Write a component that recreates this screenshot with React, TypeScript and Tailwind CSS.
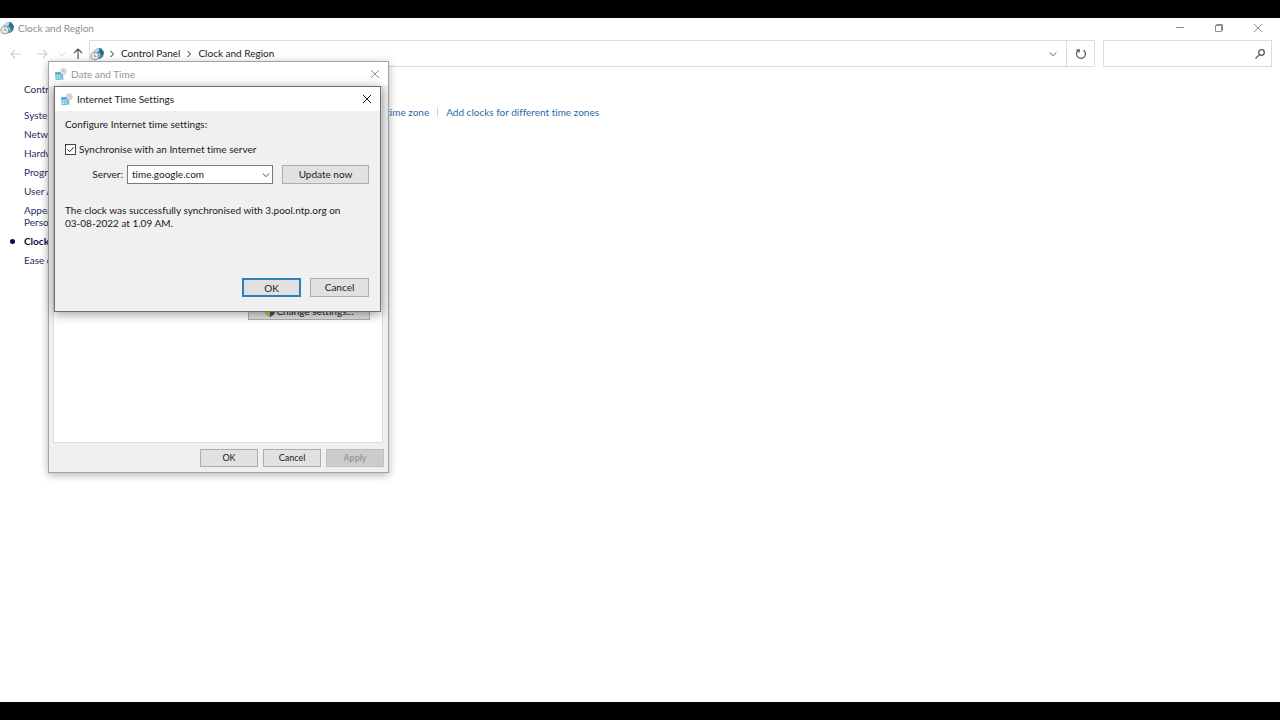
import { useState } from 'react'
import type { ReactNode } from 'react'

const sidebarLinks = [
  'System and Security',
  'Network and Internet',
  'Hardware and Sound',
  'Programs',
  'User Accounts',
  'Appearance and Personalisation',
  'Clock and Region',
  'Ease of Access',
]

function GlobeClockIcon() {
  return (
    <svg viewBox="0 0 14 14" className="size-3.5 shrink-0" aria-hidden="true">
      <path d="M3.400 4.200 7.600.8l3.600.6L13.800 5l-.8 5-3.600 2.200L5 10z" fill="#4f90ad" />
      <path d="M3.400 4.200 7.600.8l2 1.500-1.800 2.800-3 1.200z" fill="#b4dbe9" />
      <path d="m9.600 1.200 1.600.2L13.800 5l-.6 3.400-1.600.4-2-3z" fill="#2f6c8b" />
      <path d="m7.600 5.800 2.600.8-.2 3.400-2-.6z" fill="#8fc6da" />
      <circle cx="4.700" cy="9.200" r="3.900" fill="#f1f3f5" stroke="#7c8791" strokeWidth=".8" />
      <path d="M4.700 6.800v2.600h2M1.900 9.200h.8M4.700 11.300v.8" fill="none" stroke="#66717a" strokeWidth=".7" />
    </svg>
  )
}

function DateTimeIcon() {
  return (
    <svg viewBox="0 0 13 13" className="size-[13px] shrink-0" aria-hidden="true">
      <path d="M1 4.400 8.600 4l1 7.600-8 .6z" fill="#6fc3dc" />
      <path d="m1 4.400 7.600-.4.2 1.800-7.600.3z" fill="#48a6c5" />
      <path d="M2.400 7.200h1.400v1.400H2.400zM4.800 7h1.400v1.400H4.800zM2.600 9.600H4V11H2.600zM5 9.400h1.400v1.400H5z" fill="#d3f0f8" />
      <circle cx="9.300" cy="3.600" r="2.900" fill="#e6e9eb" stroke="#a9b2b8" strokeWidth=".7" />
      <path d="M9.300 2v1.800h1.400" fill="none" stroke="#828c93" strokeWidth=".6" />
    </svg>
  )
}

function ShieldIcon() {
  return (
    <svg viewBox="0 0 12 12" className="size-3 shrink-0" aria-hidden="true">
      <path d="M6 0 .5 1.500V5c0 3.200 2.200 5.800 5.500 7z" fill="#2c66ae" />
      <path d="M6 0l5.500 1.500V5c0 3.200-2.200 5.800-5.500 7z" fill="#e9bd35" />
      <path d="M.6 6H6v6C3.200 11 1.100 9 .6 6z" fill="#e9bd35" />
      <path d="M11.400 6H6v6c2.800-1 4.900-3 5.400-6z" fill="#2c5590" />
    </svg>
  )
}

function CloseIcon() {
  return (
    <svg viewBox="0 0 10 10" className="size-2.5" fill="none" stroke="currentColor" aria-hidden="true">
      <path d="m1 1 8 8M9 1 1 9" />
    </svg>
  )
}

function Chevron({ down = false }: { down?: boolean }) {
  return (
    <svg viewBox="0 0 8 8" className="size-2 shrink-0" fill="none" stroke="currentColor" aria-hidden="true">
      <path d={down ? 'm.8 2.500 3.200 3.200 3.200-3.200' : 'm2.500 1 3 3-3 3'} />
    </svg>
  )
}

function Arrow({ d }: { d: string }) {
  return (
    <svg viewBox="0 0 12 12" className="size-3" fill="none" stroke="currentColor" strokeWidth="1.1" aria-hidden="true">
      <path d={d} />
    </svg>
  )
}

function DialogTitle({ children, active = false }: { children: ReactNode; active?: boolean }) {
  return (
    <header className={`flex h-6 items-center gap-1 bg-white pr-1.5 pl-[5px] ${active ? 'text-[#1a1a1a]' : 'text-[#949494]'}`}>
      <DateTimeIcon />
      <h2 className="flex-1">{children}</h2>
      <button type="button" aria-label="Close" className="px-0.5">
        <CloseIcon />
      </button>
    </header>
  )
}

function ExplorerHeader() {
  return (
    <header>
      <div className="flex h-5 items-center gap-0.5 pr-[17px] text-[#8c8c8c]">
        <GlobeClockIcon />
        <h1 className="flex-1 pl-0.5">Clock and Region</h1>
        <div className="flex gap-[29px]">
          <button type="button" aria-label="Minimise">
            <svg viewBox="0 0 10 10" className="size-2.5" stroke="currentColor" aria-hidden="true">
              <path d="M1 4.500h8" />
            </svg>
          </button>
          <button type="button" aria-label="Restore">
            <svg viewBox="0 0 10 10" className="size-2.5" fill="none" stroke="currentColor" aria-hidden="true">
              <path d="M1.500 2.500h6v6h-6zM2.500 2.500v-1h6v6h-1" />
            </svg>
          </button>
          <button type="button" aria-label="Close">
            <CloseIcon />
          </button>
        </div>
      </div>

      <div className="flex h-[31px] items-center pr-2 text-[#222]">
        <nav aria-label="History" className="flex w-[89px] items-center pl-2.5 text-[#cfcfcf]">
          <button type="button" aria-label="Back">
            <Arrow d="M11 6H1m4-4L1 6l4 4" />
          </button>
          <button type="button" aria-label="Forward" className="ml-3.5">
            <Arrow d="M1 6h10M7 2l4 4-4 4" />
          </button>
          <button type="button" aria-label="Recent locations" className="ml-2.5">
            <Chevron down />
          </button>
          <button type="button" aria-label="Up" className="ml-1.5 text-[#4a4a4a]">
            <Arrow d="M6 11V1M2 5l4-4 4 4" />
          </button>
        </nav>
        <div className="flex h-[27px] flex-1 items-center border border-[#dcdcdc]">
          <GlobeClockIcon />
          <nav aria-label="Location" className="flex flex-1 items-center gap-[5px] pl-1">
            <Chevron />
            <a href="#control-panel">Control Panel</a>
            <Chevron />
            <a href="#clock-and-region">Clock and Region</a>
          </nav>
          <button type="button" aria-label="Previous locations" className="px-[9px] text-[#555]">
            <Chevron down />
          </button>
          <button type="button" aria-label="Refresh" className="flex h-full w-7 items-center justify-center border-l border-[#dcdcdc] text-[#555]">
            <svg viewBox="0 0 12 12" className="size-3" fill="none" stroke="currentColor" strokeWidth="1.200" aria-hidden="true">
              <path d="M8.500 2.200a4.500 4.500 0 1 1-5 0M1.500 1.800h2.700v2.700" />
            </svg>
          </button>
        </div>
        <div className="ml-2 flex h-[27px] w-[169px] items-center border border-[#dcdcdc] pr-[5px]">
          <input type="text" aria-label="Search Control Panel" className="min-w-0 flex-1 px-1 outline-none" />
          <svg viewBox="0 0 12 12" className="size-3 text-[#555]" fill="none" stroke="currentColor" strokeWidth="1.300" aria-hidden="true">
            <circle cx="7.500" cy="4.500" r="2.800" />
            <path d="M5.400 6.600 1.500 10.500" />
          </svg>
        </div>
      </div>
    </header>
  )
}

function ExplorerBody() {
  return (
    <div className="flex items-start pt-[14px]">
      <nav aria-label="Control Panel" className="w-[140px] shrink-0 pl-6 leading-3 text-[#2b2b5e]">
        <a href="#home" className="block">
          Control Panel Home
        </a>
        <ul className="mt-3.5 flex flex-col gap-[7px]">
          {sidebarLinks.map((label) => (
            <li key={label} className="relative">
              {label === 'Clock and Region' && (
                <span className="absolute top-1 -left-3.5 size-[5px] rounded-full bg-[#0b0b45]" />
              )}
              <a href="#category" className={label === 'Clock and Region' ? 'block font-bold text-[#0b0b45]' : 'block'}>
                {label}
              </a>
            </li>
          ))}
        </ul>
      </nav>
      <main className="flex w-[459px] items-center justify-end gap-2 pt-[23px] leading-3 text-[#2a6aa6]">
        <a href="#time-zone">Change the time zone</a>
        <span className="h-2.5 border-l border-[#d4d4d4]" />
        <a href="#clocks">Add clocks for different time zones</a>
      </main>
    </div>
  )
}

function DateAndTimeDialog() {
  return (
    <section
      aria-label="Date and Time"
      className="absolute top-[43px] left-12 flex h-[412px] w-[341px] flex-col border border-[#a3a3a3] bg-[#efefef] shadow-[0_2px_8px_rgba(0,0,0,0.3)]"
    >
      <DialogTitle>Date and Time</DialogTitle>
      <div className="mr-[5px] ml-1 flex flex-1 flex-col items-end border border-[#dcdcdc] bg-white pr-3">
        <button
          type="button"
          className="mt-[215px] flex h-[18px] w-[122px] items-center justify-center border border-[#adadad] bg-[#e1e1e1] text-[#1a1a1a]"
        >
          <ShieldIcon />
          Change settings...
        </button>
      </div>
      <footer className="flex justify-end gap-[5px] px-1 pt-1.5 pb-[5px] text-[9px]">
        <button type="button" className="h-[18px] w-[58px] border border-[#adadad] bg-[#e1e1e1] text-[#1a1a1a]">
          OK
        </button>
        <button type="button" className="h-[18px] w-[58px] border border-[#adadad] bg-[#e1e1e1] text-[#1a1a1a]">
          Cancel
        </button>
        <button type="button" disabled className="h-[18px] w-[58px] border border-[#bfbfbf] bg-[#cccccc] text-[#8a8a8a]">
          Apply
        </button>
      </footer>
    </section>
  )
}

function InternetTimeDialog() {
  const [sync, setSync] = useState(true)

  return (
    <section
      aria-label="Internet Time Settings"
      className="absolute top-[68px] left-[54px] w-[327px] border border-[#6e6e6e] bg-[#f0f0f0] text-[#1a1a1a] shadow-[0_2px_10px_rgba(0,0,0,0.4)]"
    >
      <DialogTitle active>Internet Time Settings</DialogTitle>
      <div className="pt-[7px] pr-[11px] pb-[14px] pl-2.5 leading-[13px]">
        <p>Configure Internet time settings:</p>
        <label className="mt-3 flex items-center gap-[3px]">
          <span className="relative flex size-[11px]">
            <input
              type="checkbox"
              checked={sync}
              onChange={(e) => setSync(e.target.checked)}
              className="size-[11px] appearance-none border border-[#444] bg-white"
            />
            {sync && (
              <svg viewBox="0 0 11 11" className="pointer-events-none absolute inset-0" fill="none" stroke="#222" aria-hidden="true">
                <path d="m2.500 5.500 2.200 2.200 4-4.400" />
              </svg>
            )}
          </span>
          Synchronise with an Internet time server
        </label>
        <div className="mt-[9px] flex items-center">
          <label htmlFor="server" className="w-[62px] pr-1 text-right">
            Server:
          </label>
          <div className="relative">
            <select id="server" className="block h-[19px] w-[146px] appearance-none border border-[#7a7a7a] bg-white pl-1">
              <option>time.google.com</option>
            </select>
            <span className="pointer-events-none absolute top-1.5 right-[3px] text-[#555]">
              <Chevron down />
            </span>
          </div>
          <button type="button" className="ml-[9px] h-[19px] flex-1 border border-[#adadad] bg-[#e1e1e1]">
            Update now
          </button>
        </div>
        <p className="mt-5 h-[61px] pr-6">
          The clock was successfully synchronised with 3.pool.ntp.org on 03-08-2022 at 1.09 AM.
        </p>
        <div className="mt-[13px] flex justify-end gap-[9px]">
          <button type="button" className="h-[19px] w-[59px] border-2 border-[#2f7fb8] bg-[#e1e1e1] leading-3">
            OK
          </button>
          <button type="button" className="h-[19px] w-[59px] border border-[#adadad] bg-[#e1e1e1]">
            Cancel
          </button>
        </div>
      </div>
    </section>
  )
}

export default function App() {
  return (
    <div className="flex min-h-screen flex-col bg-black py-[18px] font-[Lato,sans-serif] text-[10px] [font-variant-ligatures:none]">
      <div className="relative flex-1 bg-white">
        <ExplorerHeader />
        <ExplorerBody />
        <DateAndTimeDialog />
        <InternetTimeDialog />
      </div>
    </div>
  )
}
